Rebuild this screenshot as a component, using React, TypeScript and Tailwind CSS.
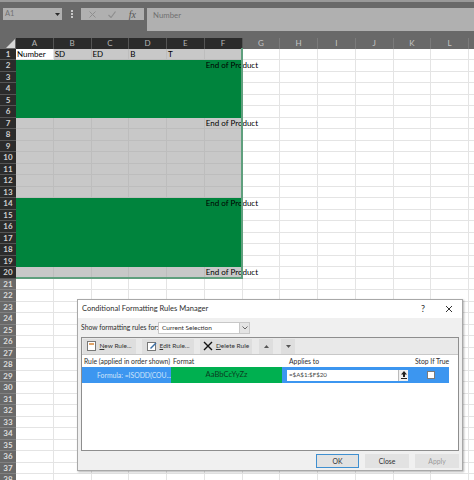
const COLS = ["A", "B", "C", "D", "E", "F", "G", "H", "I", "J", "K", "L", "M"];
const ROWS = Array.from({ length: 38 }, (_, i) => i + 1);

function cellClass(row: number, col: number) {
  if (col > 5 || row > 20) return "border-[#e4e4e4]";
  if (row === 1 && col === 0) return "bg-white border-[#e4e4e4]";
  if ((row >= 2 && row <= 6) || (row >= 14 && row <= 19)) return "bg-[#00843d] border-[#00843d]";
  return "bg-[#c8c8c8] border-[#bdbdbd]";
}

const HEAD_TEXT: Record<string, string> = { A1: "Number", B1: "SD", C1: "ED", D1: "B", E1: "T", F2: "End of Product", F7: "End of Product", F14: "End of Product", F20: "End of Product" };

function Sheet() {
  return (
    <div className="flex flex-col">
      <div className="flex h-[10.5px] overflow-hidden">
        <div className="w-4 shrink-0 bg-[#696969] flex items-end justify-end pr-[1px] pb-[1px]">
          <svg width="9" height="9" viewBox="0 0 9 9"><path d="M9 0V9H0Z" fill="#d8d8d8" /></svg>
        </div>
        {COLS.map((c, i) => (
          <div key={c} className={`w-[37.75px] shrink-0 flex items-center justify-center text-[8px] border-r ${i < 6 ? "bg-[#2b2b2b] text-[#b4b4b4] border-[#555555]" : "bg-[#696969] text-[#c4c4c4] border-[#7b7b7b]"}`}>{c}</div>
        ))}
      </div>
      {ROWS.map((r) => (
        <div key={r} className="flex h-[11.5px] overflow-hidden bg-white">
          <div className={`w-4 shrink-0 flex items-center justify-center text-[8px] font-bold border-b ${r <= 20 ? "bg-[#2b2b2b] text-[#cfcfcf] border-[#555555]" : "bg-[#696969] text-[#dddddd] border-[#808080]"}`}>{r}</div>
          {COLS.map((c, i) => (
            <div key={c} className={`w-[37.75px] shrink-0 border-r border-b pl-[1px] flex items-center whitespace-nowrap text-[8px] leading-none text-black ${cellClass(r, i)}`}>
              {HEAD_TEXT[`${c}${r}`]}
            </div>
          ))}
        </div>
      ))}
    </div>
  );
}

function ToolButton({ icon, label, ul, width }: { icon: React.ReactNode; label: string; ul: string; width: string }) {
  return (
    <div className={`${width} h-[15px] bg-[#dedede] flex items-center justify-center gap-[3px] text-[6.5px] text-[#333333] whitespace-nowrap`}>
      {icon}
      <span><span className="underline">{ul}</span>{label}</span>
    </div>
  );
}

function Dialog() {
  return (
    <div className="absolute left-[77px] top-[299px] w-[386px] h-[172px] bg-[#f0f0f0] border border-[#a8a8a8] shadow-[1px_1px_2px_rgba(0,0,0,0.3)] flex flex-col text-[#2e2e2e] whitespace-nowrap">
      <div className="h-[18px] shrink-0 bg-white flex items-center justify-between pl-[4px] pr-[9px] text-[7.5px]">
        <span>Conditional Formatting Rules Manager</span>
        <div className="flex items-center gap-[20px]">
          <span className="text-[9px]">?</span>
          <svg width="8" height="8" viewBox="0 0 8 8" stroke="#333333" strokeWidth="1"><path d="M1 1L7 7M7 1L1 7" /></svg>
        </div>
      </div>
      <div className="h-[19px] shrink-0 flex items-center pl-[3px] text-[6.8px]">
        <span className="w-[77px]">Show formatting rules for:</span>
        <div className="w-[92px] h-[12px] bg-white border border-[#c8c8c8] flex items-center justify-between pl-[3px] text-[6.5px]">
          <span>Current Selection</span>
          <div className="w-[10px] h-full bg-[#e4e4e4] border-l border-[#c8c8c8] flex items-center justify-center">
            <svg width="6" height="4" viewBox="0 0 6 4" fill="none" stroke="#666666"><path d="M.5.5L3 3L5.5.5" /></svg>
          </div>
        </div>
      </div>
      <div className="mx-[3px] h-[114px] shrink-0 bg-white border border-[#8e8e8e] flex flex-col">
        <div className="h-[17px] shrink-0 bg-[#e9e9e9] border-b border-[#c8c8c8] flex items-center pl-[1px] gap-[6px]">
          <ToolButton width="w-[53px]" ul="N" label="ew Rule..." icon={
            <svg width="9" height="10" viewBox="0 0 9 10"><rect x=".5" y=".5" width="8" height="9" fill="#fff" stroke="#777" /><rect x="2" y="2" width="5" height="2" fill="#e2a468" /></svg>
          } />
          <ToolButton width="w-[52px]" ul="E" label="dit Rule..." icon={
            <svg width="10" height="10" viewBox="0 0 10 10"><rect x=".5" y="1.5" width="8" height="8" fill="#fff" stroke="#777" /><path d="M3 7L8.5 1.5L9.5 2.5L4 8Z" fill="#3a6ea5" /></svg>
          } />
          <ToolButton width="w-[52px]" ul="D" label="elete Rule" icon={
            <svg width="10" height="10" viewBox="0 0 10 10" stroke="#111" strokeWidth="1.4"><path d="M1 1L9 9M9 1L1 9" /></svg>
          } />
          <div className="w-[14px] h-[15px] ml-[1px] bg-[#dedede] flex items-center justify-center">
            <svg width="5" height="3" viewBox="0 0 5 3"><path d="M0 3L2.5 0L5 3Z" fill="#555" /></svg>
          </div>
          <div className="w-[14px] h-[15px] ml-[2px] bg-[#dedede] flex items-center justify-center">
            <svg width="5" height="3" viewBox="0 0 5 3"><path d="M0 0L2.5 3L5 0Z" fill="#555" /></svg>
          </div>
        </div>
        <div className="h-[12px] shrink-0 flex items-center text-[6.8px] pl-[2px]">
          <span className="w-[89px]">Rule (applied in order shown)</span>
          <span className="w-[116px]">Format</span>
          <span className="w-[126px]">Applies to</span>
          <span>Stop If True</span>
        </div>
        <div className="h-[16px] w-[367px] shrink-0 bg-[#3c96f0] flex items-center">
          <span className="w-[89px] pl-[15px] text-[6.8px] text-[#cfe4fa] overflow-hidden">Formula: =ISODD(COU...</span>
          <div className="w-[111px] h-full bg-[#00b050] flex items-center justify-center text-[7.6px] text-[#0a3d20]">AaBbCcYyZz</div>
          <div className="w-[121px] h-[11px] ml-[5px] bg-white flex items-center justify-between pl-[2px] text-[6.2px] text-[#444444]">
            <span>=$A$1:$F$20</span>
            <div className="w-[10px] h-full bg-[#f0f0f0] border-l border-[#bbbbbb] flex items-center justify-center">
              <svg width="6" height="8" viewBox="0 0 6 8"><path d="M3 0L6 3.5H4V6H2V3.5H0Z" fill="#222" /><rect y="7" width="6" height="1" fill="#222" /></svg>
            </div>
          </div>
          <div className="w-[8px] h-[8px] ml-[19px] bg-white border border-[#7a7a7a]" />
        </div>
      </div>
      <div className="flex justify-end gap-[6px] pr-[3px] mt-[3px] text-[6.8px]">
        <div className="w-[43px] h-[14px] bg-[#e2e2e2] border border-[#3f8fd0] flex items-center justify-center">OK</div>
        <div className="w-[44px] h-[14px] bg-[#e2e2e2] flex items-center justify-center">Close</div>
        <div className="w-[44px] h-[14px] bg-[#e2e2e2] text-[#9a9a9a] flex items-center justify-center">Apply</div>
      </div>
    </div>
  );
}

export default function App() {
  return (
    <div className="relative w-[474px] h-[480px] overflow-hidden bg-white font-['Lato','Liberation_Sans',sans-serif]">
      <div className="h-[2px] bg-[#999999]" />
      <div className="h-[36px] bg-[#696969] pt-[6px] pl-[3px] flex items-start">
        <div className="w-[59px] h-[12px] bg-[#b0b0b0] flex items-center justify-between pl-[2px] pr-[2px] text-[7.5px] text-[#707070]">
          <span>A1</span>
          <svg width="5" height="3" viewBox="0 0 5 3"><path d="M0 0L2.5 3L5 0Z" fill="#2b2b2b" /></svg>
        </div>
        <div className="w-[19px] h-[12px] flex flex-col items-center justify-center gap-[1px]">
          <span className="w-[2px] h-[2px] bg-[#c8c8c8]" /><span className="w-[2px] h-[2px] bg-[#c8c8c8]" /><span className="w-[2px] h-[2px] bg-[#c8c8c8]" />
        </div>
        <div className="w-[63px] h-[12px] bg-[#b0b0b0] flex items-center justify-around px-[2px]">
          <svg width="7" height="7" viewBox="0 0 7 7" stroke="#8e8e8e" strokeWidth="1"><path d="M.5.5L6.5 6.5M6.5.5L.5 6.5" /></svg>
          <svg width="8" height="7" viewBox="0 0 8 7" fill="none" stroke="#8e8e8e" strokeWidth="1.2"><path d="M.5 4L3 6.5L7.5.5" /></svg>
          <span className="font-['Liberation_Serif',serif] italic text-[10px] text-[#555555]">fx</span>
        </div>
        <div className="flex-1 h-[23px] ml-[3px] bg-[#b0b0b0] pl-[6px] pt-[1px] text-[7.8px] leading-[12px] text-[#707070]">Number</div>
      </div>
      <Sheet />
      <div className="absolute left-[16px] top-[48px] w-[227px] h-[231px] border-r-2 border-b-2 border-[#5f9f7d] pointer-events-none" />
      <Dialog />
    </div>
  );
}
